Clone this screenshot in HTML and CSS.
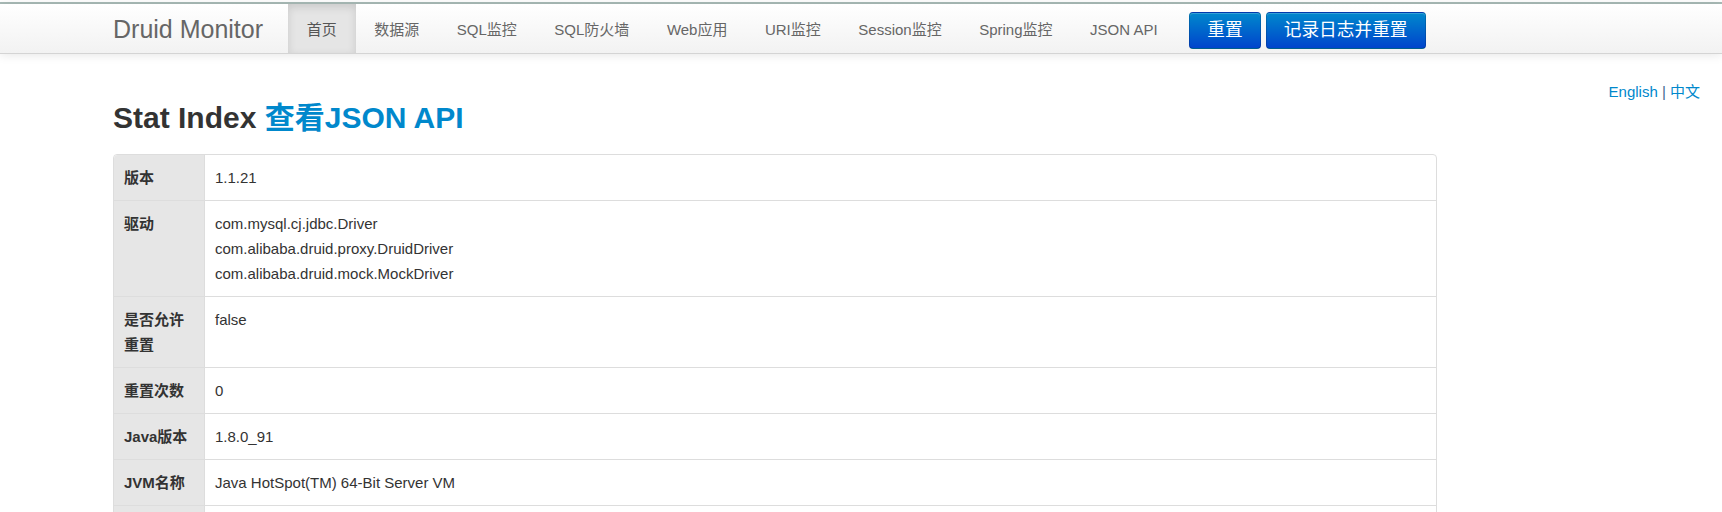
FILE: index.html
```html
<!DOCTYPE html>
<html lang="zh-CN">
<head>
<meta charset="utf-8">
<title>Druid Stat Index</title>
<link rel="stylesheet" href="styles.css">
</head>
<body>
<div class="topline"></div>
<header class="navbar">
  <div class="nav-inner">
    <a class="brand" href="#">Druid Monitor</a>
    <ul class="nav">
      <li class="active"><a href="#">首页</a></li>
      <li><a href="#">数据源</a></li>
      <li><a href="#">SQL监控</a></li>
      <li><a href="#">SQL防火墙</a></li>
      <li><a href="#">Web应用</a></li>
      <li><a href="#">URI监控</a></li>
      <li><a href="#">Session监控</a></li>
      <li><a href="#">Spring监控</a></li>
      <li><a href="#">JSON API</a></li>
    </ul>
    <div class="actions">
      <a class="btn" href="#">重置</a>
      <a class="btn" href="#">记录日志并重置</a>
    </div>
  </div>
</header>
<main class="page">
  <div class="lang"><a href="#">English</a> <span class="sep">|</span> <a href="#">中文</a></div>
  <div class="container">
    <h2 class="title">Stat Index <a href="#">查看JSON API</a></h2>
    <table class="stat">
      <tbody>
        <tr><th>版本</th><td>1.1.21</td></tr>
        <tr><th>驱动</th><td>com.mysql.cj.jdbc.Driver<br>com.alibaba.druid.proxy.DruidDriver<br>com.alibaba.druid.mock.MockDriver</td></tr>
        <tr><th>是否允许重置</th><td>false</td></tr>
        <tr><th>重置次数</th><td>0</td></tr>
        <tr><th>Java版本</th><td>1.8.0_91</td></tr>
        <tr><th>JVM名称</th><td>Java HotSpot(TM) 64-Bit Server VM</td></tr>
        <tr class="more"><th></th><td></td></tr>
      </tbody>
    </table>
  </div>
</main>
</body>
</html>
```

FILE: styles.css
```css
html, body {
  margin: 0;
  padding: 0;
  background: #fff;
}
body {
  font-family: "Liberation Sans", Arial, "Noto Sans CJK SC", sans-serif;
  font-size: 15px;
  line-height: 25px;
  color: #333;
}
a {
  text-decoration: none;
  color: #0088cc;
}

.topline {
  height: 2px;
  margin-top: 2px;
  background: #a9bbb7;
}

.navbar {
  background: linear-gradient(to bottom, #ffffff, #f2f2f2);
  border-bottom: 1px solid #d4d4d4;
  box-shadow: 0 1px 10px rgba(0, 0, 0, 0.1);
  position: relative;
  z-index: 1;
}
.nav-inner {
  display: flex;
  align-items: stretch;
  height: 49px;
  padding-left: 113px;
}
.brand {
  display: flex;
  align-items: center;
  font-size: 25px;
  color: #666;
  margin-right: 25px;
  padding-top: 1px;
}
.nav {
  display: flex;
  margin: 0;
  padding: 0;
  list-style: none;
}
.nav li {
  display: flex;
}
.nav a {
  display: flex;
  align-items: center;
  padding: 2px 18.75px 0;
  color: #666;
  font-size: 15px;
}
.nav .active a {
  background: #e5e5e5;
  color: #555;
  box-shadow: inset 0 3px 8px rgba(0, 0, 0, 0.125);
}
.actions {
  display: flex;
  gap: 5px;
  margin-left: 13px;
  align-self: flex-start;
  margin-top: 8px;
}
.btn {
  display: block;
  height: 35px;
  line-height: 35px;
  padding: 0 17px;
  font-size: 17.7px;
  color: #fff;
  background: linear-gradient(to bottom, #0088cc, #0044cc);
  border: 1px solid rgba(0, 0, 0, 0.15);
  border-bottom-color: rgba(0, 0, 0, 0.3);
  border-radius: 4px;
  box-shadow: inset 0 1px 0 rgba(255, 255, 255, 0.2);
}

.page {
  padding-top: 25px;
}
.lang {
  float: right;
  margin-right: 22px;
  font-size: 15px;
  line-height: 25px;
}
.lang .sep {
  color: #3d6690;
}
.container {
  margin-left: 113px;
  width: 1324px;
}
.title {
  margin: 19px 0 16px;
  font-size: 30px;
  line-height: 40px;
  font-weight: bold;
  color: #333;
}
.title a {
  color: #0088cc;
}

.stat {
  width: 100%;
  border: 1px solid #ddd;
  border-radius: 4px;
  border-collapse: separate;
  border-spacing: 0;
}
.stat th,
.stat td {
  padding: 10px;
  line-height: 25px;
  text-align: left;
  vertical-align: top;
  border-top: 1px solid #ddd;
}
.stat tr:first-child th,
.stat tr:first-child td {
  border-top: 0;
}
.stat th {
  width: 70px;
  background: #e6e6e6;
  font-weight: bold;
  color: #333;
}
.stat tr:first-child th {
  border-top-left-radius: 4px;
}
.stat td {
  border-left: 1px solid #ddd;
  color: #333;
}
.stat .more th,
.stat .more td {
  height: 25px;
}
```
